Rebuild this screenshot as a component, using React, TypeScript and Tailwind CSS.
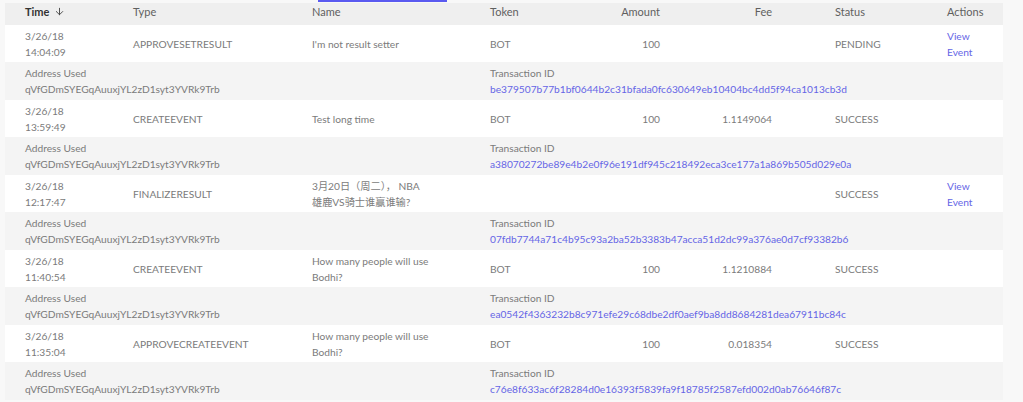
import React from "react";
import { ArrowDown } from "lucide-react";

type Row = {
  date: string;
  time: string;
  type: string;
  name: React.ReactNode;
  token: string;
  amount: string;
  fee: string;
  status: string;
  action: boolean;
  address: string;
  tx: string;
};

const rows: Row[] = [
  {
    date: "3/26/18",
    time: "14:04:09",
    type: "APPROVESETRESULT",
    name: "I'm not result setter",
    token: "BOT",
    amount: "100",
    fee: "",
    status: "PENDING",
    action: true,
    address: "qVfGDmSYEGqAuuxjYL2zD1syt3YVRk9Trb",
    tx: "be379507b77b1bf0644b2c31bfada0fc630649eb10404bc4dd5f94ca1013cb3d",
  },
  {
    date: "3/26/18",
    time: "13:59:49",
    type: "CREATEEVENT",
    name: "Test long time",
    token: "BOT",
    amount: "100",
    fee: "1.1149064",
    status: "SUCCESS",
    action: false,
    address: "qVfGDmSYEGqAuuxjYL2zD1syt3YVRk9Trb",
    tx: "a38070272be89e4b2e0f96e191df945c218492eca3ce177a1a869b505d029e0a",
  },
  {
    date: "3/26/18",
    time: "12:17:47",
    type: "FINALIZERESULT",
    name: (
      <>
        3月20日（周二）， NBA
        <br />
        雄鹿VS骑士谁赢谁输?
      </>
    ),
    token: "",
    amount: "",
    fee: "",
    status: "SUCCESS",
    action: true,
    address: "qVfGDmSYEGqAuuxjYL2zD1syt3YVRk9Trb",
    tx: "07fdb7744a71c4b95c93a2ba52b3383b47acca51d2dc99a376ae0d7cf93382b6",
  },
  {
    date: "3/26/18",
    time: "11:40:54",
    type: "CREATEEVENT",
    name: "How many people will use Bodhi?",
    token: "BOT",
    amount: "100",
    fee: "1.1210884",
    status: "SUCCESS",
    action: false,
    address: "qVfGDmSYEGqAuuxjYL2zD1syt3YVRk9Trb",
    tx: "ea0542f4363232b8c971efe29c68dbe2df0aef9ba8dd8684281dea67911bc84c",
  },
  {
    date: "3/26/18",
    time: "11:35:04",
    type: "APPROVECREATEEVENT",
    name: "How many people will use Bodhi?",
    token: "BOT",
    amount: "100",
    fee: "0.018354",
    status: "SUCCESS",
    action: false,
    address: "qVfGDmSYEGqAuuxjYL2zD1syt3YVRk9Trb",
    tx: "c76e8f633ac6f28284d0e16393f5839fa9f18785f2587efd002d0ab76646f87c",
  },
];

const cols = "grid grid-cols-[108px_179px_178px_90px_120px_135px_112px_76px]";

export default function App() {
  return (
    <div
      className="w-[1023px] h-[402px] overflow-hidden bg-[#f8f8f8] text-[10.2px] text-[#7b7b7b]"
      style={{ fontFamily: "Lato, 'Noto Sans CJK SC', sans-serif" }}
    >
      <div className="relative h-[3px]">
        <div className="absolute left-[318px] top-0 h-[2px] w-[129px] bg-[#5a5af0]" />
      </div>
      <div className="ml-[5px] w-[998px]">
        <div className={`${cols} h-[22px] items-start pt-[1px] leading-[15px] bg-[#efefef] text-[11px] text-[#5f5f5f]`}>
          <div className="pl-5 flex items-center gap-[5px] font-bold text-[#333]">
            Time <ArrowDown size={11} strokeWidth={2} className="text-[#444]" />
          </div>
          <div className="pl-5">Type</div>
          <div className="pl-5">Name</div>
          <div className="pl-5">Token</div>
          <div className="pr-5 text-right">Amount</div>
          <div className="pr-[43px] text-right">Fee</div>
          <div className="pl-5">Status</div>
          <div className="pl-5">Actions</div>
        </div>
        {rows.map((r, i) => (
          <React.Fragment key={i}>
            <div className={`${cols} h-[37px] items-center bg-white leading-[16px]`}>
              <div className="pl-5">
                <div>{r.date}</div>
                <div>{r.time}</div>
              </div>
              <div className="pl-5">{r.type}</div>
              <div className="pl-5 pr-8">{r.name}</div>
              <div className="pl-5">{r.token}</div>
              <div className="pr-5 text-right">{r.amount}</div>
              <div className="pr-[43px] text-right">{r.fee}</div>
              <div className="pl-5">{r.status}</div>
              <div className="pl-5 text-[#6565e6]">
                {r.action && (
                  <>
                    <div>View</div>
                    <div>Event</div>
                  </>
                )}
              </div>
            </div>
            <div className={`${cols} h-[38px] items-center bg-[#f4f4f4] leading-[16px]`}>
              <div className="col-span-3 pl-5">
                <div>Address Used</div>
                <div>{r.address}</div>
              </div>
              <div className="col-span-5 pl-5">
                <div>Transaction ID</div>
                <div className="text-[#6565e6]">{r.tx}</div>
              </div>
            </div>
          </React.Fragment>
        ))}
      </div>
    </div>
  );
}
